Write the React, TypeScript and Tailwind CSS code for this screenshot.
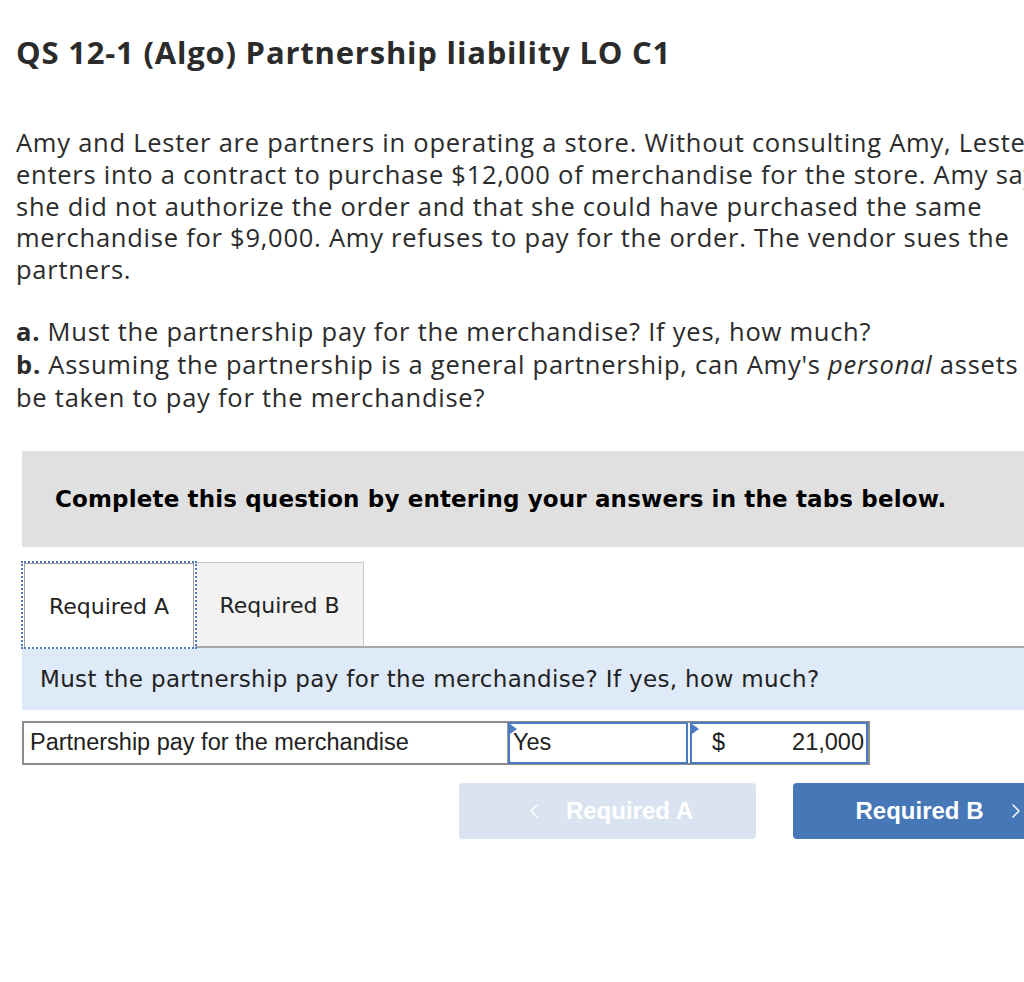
import React from 'react'
import { ChevronLeft, ChevronRight } from 'lucide-react'

const body = { fontFamily: '"Open Sans", Lato, sans-serif' }
const verdana = { fontFamily: '"DejaVu Sans", Verdana, sans-serif' }
const arial = { fontFamily: '"Liberation Sans", Arial, sans-serif' }

const Flag: React.FC = () => (
  <span className="absolute left-0 top-0 w-0 h-0 border-t-[5px] border-b-[5px] border-l-[7px] border-t-transparent border-b-transparent border-l-[#4a7bbf]" />
)

const App: React.FC = () => {
  return (
    <div className="w-full min-h-[982px] overflow-hidden bg-white">
      <div className="w-[1100px] text-[#2b2b2b]" style={body}>
        {/* Header */}
        <h1 className="pl-[16px] pt-[32px] text-[31px] leading-[40px] font-bold tracking-[0.8px]">
          QS 12-1 (Algo) Partnership liability LO C1
        </h1>

        {/* Problem text */}
        <p className="pl-[16px] mt-[55px] text-[25.5px] leading-[31.8px] tracking-[0.75px] whitespace-nowrap">
          Amy and Lester are partners in operating a store. Without consulting Amy, Lester
          <br />
          enters into a contract to purchase $12,000 of merchandise for the store. Amy says
          <br />
          she did not authorize the order and that she could have purchased the same
          <br />
          merchandise for $9,000. Amy refuses to pay for the order. The vendor sues the
          <br />
          partners.
        </p>

        <p className="pl-[16px] mt-[29px] text-[25.5px] leading-[33px] tracking-[0.75px] whitespace-nowrap">
          <span className="font-bold">a.</span> Must the partnership pay for the merchandise? If yes, how much?
          <br />
          <span className="font-bold">b.</span> Assuming the partnership is a general partnership, can Amy's{' '}
          <em>personal</em> assets
          <br />
          be taken to pay for the merchandise?
        </p>

        {/* Answer area */}
        <div className="ml-[22px] w-[1068px] mt-[37px]">
          <div className="h-[96px] bg-[#e0e0e0] flex items-center pl-[33px]" style={verdana}>
            <span className="text-[23px] font-bold tracking-[0.15px] text-black">
              Complete this question by entering your answers in the tabs below.
            </span>
          </div>

          {/* Tabs */}
          <div className="flex items-end mt-[15px] h-[86px]" style={verdana}>
            <div className="relative w-[174px] h-full outline-2 outline-dotted outline-[#4a7bbf] -outline-offset-1">
              <div className="h-full mx-[2px] mt-[1px] border-t border-x border-[#a0a0a0] bg-white flex items-center justify-center text-[22px] text-[#222]">
                Required A
              </div>
            </div>
            <div className="w-[168px] h-full border-t border-r border-[#c8c8c8] bg-[#f2f2f2] border-b-2 border-b-[#a8a8a8] flex items-center justify-center pt-[2px] text-[22px] text-[#222]">
              Required B
            </div>
            <div className="flex-1 border-b-2 border-[#a8a8a8]" />
          </div>

          <div className="h-[62px] bg-[#deeaf7] flex items-center pl-[18px]" style={verdana}>
            <span className="text-[23px] tracking-[0.35px] text-[#222]">
              Must the partnership pay for the merchandise? If yes, how much?
            </span>
          </div>

          {/* Answer row */}
          <div className="mt-[11px] flex w-[848px] h-[44px] border-2 border-[#8c8c8c] text-[23.5px] text-[#222]" style={arial}>
            <div className="w-[484px] flex items-center pl-[6px] border-r border-[#9a9a9a]">
              Partnership pay for the merchandise
            </div>
            <div className="relative w-[180px] flex items-center pl-[3px] border-2 border-[#4a7bbf] -my-[1px]">
              <Flag />
              Yes
            </div>
            <div className="relative flex-1 flex items-center border-2 border-[#4a7bbf] ml-[2px] -my-[1px] pl-[20px] pr-[2px]">
              <Flag />
              <span>$</span>
              <span className="flex-1 text-right">21,000</span>
            </div>
          </div>

          {/* Navigation */}
          <div className="mt-[18px] flex justify-end gap-[37px]" style={arial}>
            <button className="w-[297px] h-[56px] rounded-[4px] bg-[#dae4f0] text-white text-[24px] font-bold flex items-center justify-center gap-[20px]">
              <ChevronLeft className="w-[24px] h-[24px]" strokeWidth={1.5} />
              Required A
            </button>
            <button className="w-[297px] h-[56px] rounded-[4px] bg-[#4677b6] text-white text-[24px] font-bold flex items-center justify-center gap-[20px]">
              Required B
              <ChevronRight className="w-[24px] h-[24px]" strokeWidth={1.5} />
            </button>
          </div>
        </div>
      </div>
    </div>
  )
}

export default App
